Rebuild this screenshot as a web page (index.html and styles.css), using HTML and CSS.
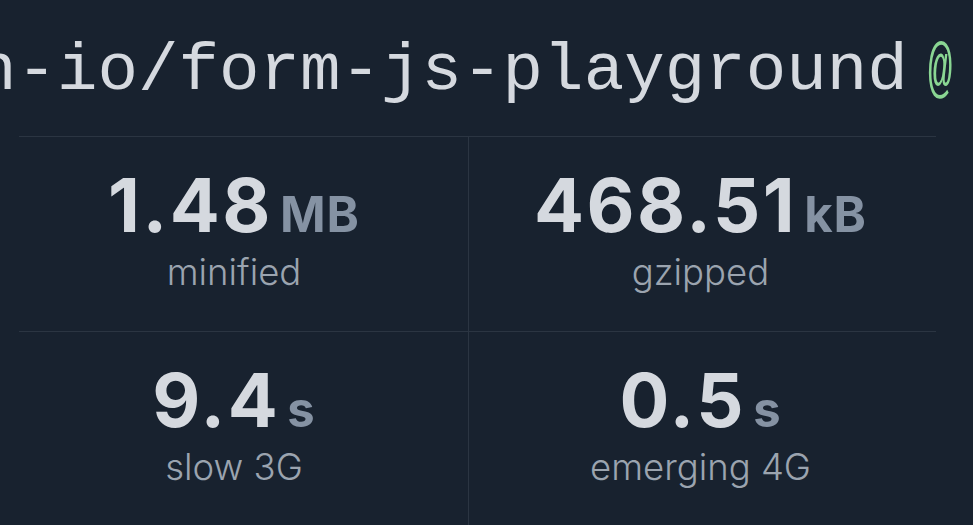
FILE: index.html
```html
<!DOCTYPE html>
<html lang="en">
<head>
<meta charset="utf-8">
<title>@bpmn-io/form-js-playground</title>
<link rel="stylesheet" href="styles.css">
</head>
<body>
<div class="page">
  <h1 class="title"><span class="name">@bpmn-io/form-js-playground</span><span class="at">@</span></h1>
  <div class="stats">
    <div class="rule"></div>
    <div class="stat">
      <div class="value"><span class="num">1.48</span><span class="unit">MB</span></div>
      <div class="label">minified</div>
    </div>
    <div class="stat stat-right">
      <div class="value"><span class="num">468.51</span><span class="unit">kB</span></div>
      <div class="label">gzipped</div>
    </div>
    <div class="rule"></div>
    <div class="stat">
      <div class="value"><span class="num">9.4</span><span class="unit">s</span></div>
      <div class="label">slow 3G</div>
    </div>
    <div class="stat stat-right">
      <div class="value"><span class="num">0.5</span><span class="unit">s</span></div>
      <div class="label">emerging 4G</div>
    </div>
  </div>
</div>
</body>
</html>
```

FILE: styles.css
```css
html, body {
  margin: 0;
  padding: 0;
  background: #18222f;
  overflow: hidden;
}

.page {
  width: 973px;
  height: 525px;
  overflow: hidden;
}

.title {
  margin: 0;
  height: 136px;
  box-sizing: border-box;
  padding-top: 26px;
  white-space: nowrap;
  font-family: "Liberation Mono", "DejaVu Sans Mono", monospace;
  font-weight: 400;
  font-size: 67.5px;
  line-height: 90px;
  color: #d5d9df;
  overflow: hidden;
}

.name {
  margin-left: -186px;
}

.at {
  display: inline-block;
  color: #8ad693;
  margin-left: 20px;
  transform: scaleX(0.6);
  transform-origin: left center;
}

.stats {
  display: grid;
  grid-template-columns: 468px 464px;
  font-family: Inter, "Noto Sans", sans-serif;
}

.rule {
  grid-column: 1 / -1;
  height: 1px;
  background: #2b3542;
  margin-left: 19px;
  margin-right: -4px;
}

.stat {
  height: 194px;
  display: flex;
  flex-direction: column;
  align-items: center;
  box-sizing: border-box;
  padding-top: 30px;
}

.stat-right {
  border-left: 1px solid #2b3542;
}

.value {
  display: flex;
  align-items: baseline;
  line-height: 76px;
}

.num {
  font-size: 74px;
  font-weight: 700;
  color: #d5d9df;
  letter-spacing: 2.5px;
}

.unit {
  font-size: 49px;
  font-weight: 700;
  color: #8592a3;
  margin-left: 7px;
  letter-spacing: 1px;
}

.label {
  font-size: 36.5px;
  font-weight: 300;
  color: #9ba4af;
  line-height: 44px;
  margin-top: -3px;
}
```
